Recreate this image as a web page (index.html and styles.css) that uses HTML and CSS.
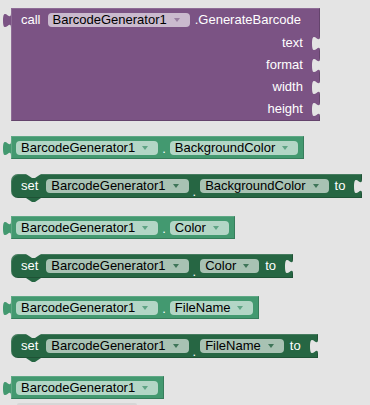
FILE: index.html
```html
<!DOCTYPE html>
<html lang="en">
<head>
  <meta charset="UTF-8">
  <title>BarcodeGenerator blocks</title>
  <link rel="stylesheet" href="styles.css">
</head>
<body>

<div class="workspace">

  <!-- call method block -->
  <div class="block call">
    <svg class="tab" viewBox="0 0 8 15"><path d="M8,0 c0,10 -8,-8 -8,7.5 s8,-2.5 8,7.5 z"/></svg>
    <div class="body">
      <div class="head">
        <span class="word">call</span>
        <span class="dd">BarcodeGenerator1<i class="arrow"></i></span>
        <span class="word method">.GenerateBarcode</span>
      </div>
      <div class="input"><span>text</span><svg class="notch" viewBox="0 0 8 15"><path d="M8,0 c0,10 -8,-8 -8,7.5 s8,-2.5 8,7.5 z"/></svg></div>
      <div class="input"><span>format</span><svg class="notch" viewBox="0 0 8 15"><path d="M8,0 c0,10 -8,-8 -8,7.5 s8,-2.5 8,7.5 z"/></svg></div>
      <div class="input"><span>width</span><svg class="notch" viewBox="0 0 8 15"><path d="M8,0 c0,10 -8,-8 -8,7.5 s8,-2.5 8,7.5 z"/></svg></div>
      <div class="input"><span>height</span><svg class="notch" viewBox="0 0 8 15"><path d="M8,0 c0,10 -8,-8 -8,7.5 s8,-2.5 8,7.5 z"/></svg></div>
    </div>
  </div>

  <!-- BackgroundColor -->
  <div class="block getter">
    <svg class="tab" viewBox="0 0 8 15"><path d="M8,0 c0,10 -8,-8 -8,7.5 s8,-2.5 8,7.5 z"/></svg>
    <div class="body">
      <span class="dd">BarcodeGenerator1<i class="arrow"></i></span>
      <span class="dot">.</span>
      <span class="dd">BackgroundColor<i class="arrow"></i></span>
    </div>
  </div>

  <div class="block setter">
    <div class="body">
      <svg class="top-notch" viewBox="0 0 15 4"><path d="M0,0 l6,4 3,0 6,-4 z"/></svg>
      <span class="word set">set</span>
      <span class="dd">BarcodeGenerator1<i class="arrow"></i></span>
      <span class="dot">.</span>
      <span class="dd">BackgroundColor<i class="arrow"></i></span>
      <span class="word to">to</span>
      <svg class="notch" viewBox="0 0 8 15"><path d="M8,0 c0,10 -8,-8 -8,7.5 s8,-2.5 8,7.5 z"/></svg>
      <svg class="next-tab" viewBox="0 0 15 4"><path d="M0,0 l6,4 3,0 6,-4 z"/></svg>
    </div>
  </div>

  <!-- Color -->
  <div class="block getter">
    <svg class="tab" viewBox="0 0 8 15"><path d="M8,0 c0,10 -8,-8 -8,7.5 s8,-2.5 8,7.5 z"/></svg>
    <div class="body">
      <span class="dd">BarcodeGenerator1<i class="arrow"></i></span>
      <span class="dot">.</span>
      <span class="dd">Color<i class="arrow"></i></span>
    </div>
  </div>

  <div class="block setter">
    <div class="body">
      <svg class="top-notch" viewBox="0 0 15 4"><path d="M0,0 l6,4 3,0 6,-4 z"/></svg>
      <span class="word set">set</span>
      <span class="dd">BarcodeGenerator1<i class="arrow"></i></span>
      <span class="dot">.</span>
      <span class="dd">Color<i class="arrow"></i></span>
      <span class="word to">to</span>
      <svg class="notch" viewBox="0 0 8 15"><path d="M8,0 c0,10 -8,-8 -8,7.5 s8,-2.5 8,7.5 z"/></svg>
      <svg class="next-tab" viewBox="0 0 15 4"><path d="M0,0 l6,4 3,0 6,-4 z"/></svg>
    </div>
  </div>

  <!-- FileName -->
  <div class="block getter">
    <svg class="tab" viewBox="0 0 8 15"><path d="M8,0 c0,10 -8,-8 -8,7.5 s8,-2.5 8,7.5 z"/></svg>
    <div class="body">
      <span class="dd">BarcodeGenerator1<i class="arrow"></i></span>
      <span class="dot">.</span>
      <span class="dd">FileName<i class="arrow"></i></span>
    </div>
  </div>

  <div class="block setter">
    <div class="body">
      <svg class="top-notch" viewBox="0 0 15 4"><path d="M0,0 l6,4 3,0 6,-4 z"/></svg>
      <span class="word set">set</span>
      <span class="dd">BarcodeGenerator1<i class="arrow"></i></span>
      <span class="dot">.</span>
      <span class="dd">FileName<i class="arrow"></i></span>
      <span class="word to">to</span>
      <svg class="notch" viewBox="0 0 8 15"><path d="M8,0 c0,10 -8,-8 -8,7.5 s8,-2.5 8,7.5 z"/></svg>
      <svg class="next-tab" viewBox="0 0 15 4"><path d="M0,0 l6,4 3,0 6,-4 z"/></svg>
    </div>
  </div>

  <!-- component -->
  <div class="block getter">
    <svg class="tab" viewBox="0 0 8 15"><path d="M8,0 c0,10 -8,-8 -8,7.5 s8,-2.5 8,7.5 z"/></svg>
    <div class="body">
      <span class="dd">BarcodeGenerator1<i class="arrow"></i></span>
    </div>
  </div>

  <div class="ghost"></div>

</div>

</body>
</html>
```

FILE: styles.css
```css
:root {
  --canvas: #e4e4e4;
  --purple: #7b5384;
  --green: #439970;
  --dark-green: #266643;
  --field: rgba(255, 255, 255, 0.6);
}

* {
  box-sizing: border-box;
  margin: 0;
  padding: 0;
}

body {
  background-color: var(--canvas);
  font-family: "Liberation Sans", Arial, sans-serif;
  font-size: 13px;
  line-height: 14px;
  color: #fff;
  height: 405px;
  overflow: hidden;
}

.workspace {
  display: flex;
  flex-direction: column;
  align-items: flex-start;
  padding: 8px 0 0 3px;
}

/* blocks */
.block {
  display: flex;
  align-items: flex-start;
  width: max-content;
  color: var(--green);
}

.block .body {
  position: relative;
  display: flex;
  align-items: center;
  color: #fff;
  box-shadow: inset -1px -1px 0 rgba(0, 0, 0, 0.18), inset 1px 1px 0 rgba(255, 255, 255, 0.15);
}

.block .body > * {
  flex-shrink: 0;
}

.tab {
  flex: none;
  width: 8px;
  height: 15px;
  margin-top: 5px;
  fill: currentColor;
}

.notch {
  flex: none;
  width: 8px;
  height: 15px;
  fill: var(--canvas);
}

/* call method */
.call {
  color: var(--purple);
}

.call .body {
  background-color: var(--purple);
  flex-direction: column;
  align-items: stretch;
  padding-bottom: 1px;
}

.call .head {
  display: flex;
  align-items: center;
  height: 24px;
  padding: 0 19px 0 10px;
}

.call .head .dd {
  margin: 0 5px 0 7px;
}

.call .arrow {
  border-top-color: #9a7fa1;
}

.input {
  display: flex;
  align-items: center;
  justify-content: flex-end;
  height: 22px;
  gap: 9px;
}

/* getters */
.getter {
  margin-top: 15px;
}

.getter .body {
  background-color: var(--green);
  padding: 5px 6px 4px 5px;
}

.getter .arrow {
  border-top-color: #5fa585;
}

/* setters */
.setter {
  margin: 15px 0 3px 8px;
}

.setter .body {
  background-color: var(--dark-green);
  border-radius: 7px 0 0 7px;
  height: 24px;
  padding-left: 10px;
}

.set {
  margin-right: 8px;
}

.setter .arrow {
  border-top-color: #3e7558;
}

.top-notch {
  position: absolute;
  top: 0;
  left: 15px;
  width: 15px;
  height: 4px;
  fill: var(--canvas);
}

.next-tab {
  position: absolute;
  bottom: -4px;
  left: 15px;
  width: 15px;
  height: 4px;
  fill: var(--dark-green);
}

.to {
  margin: 0 9px 0 6px;
}

/* dropdown fields */
.dd {
  display: inline-flex;
  align-items: center;
  height: 14px;
  padding: 0 10px 0 5px;
  border-radius: 4px;
  background-color: var(--field);
  color: #000;
  white-space: nowrap;
}

.arrow {
  display: inline-block;
  margin-left: 7px;
  border-left: 3px solid transparent;
  border-right: 3px solid transparent;
  border-top: 4px solid #888;
}

.dot {
  margin: 0 4px;
  align-self: flex-end;
  line-height: 13px;
}

.ghost {
  margin: 4px 0 0 14px;
  width: 120px;
  height: 10px;
  background-color: #d6d6d6;
  border-radius: 2px;
}
```
